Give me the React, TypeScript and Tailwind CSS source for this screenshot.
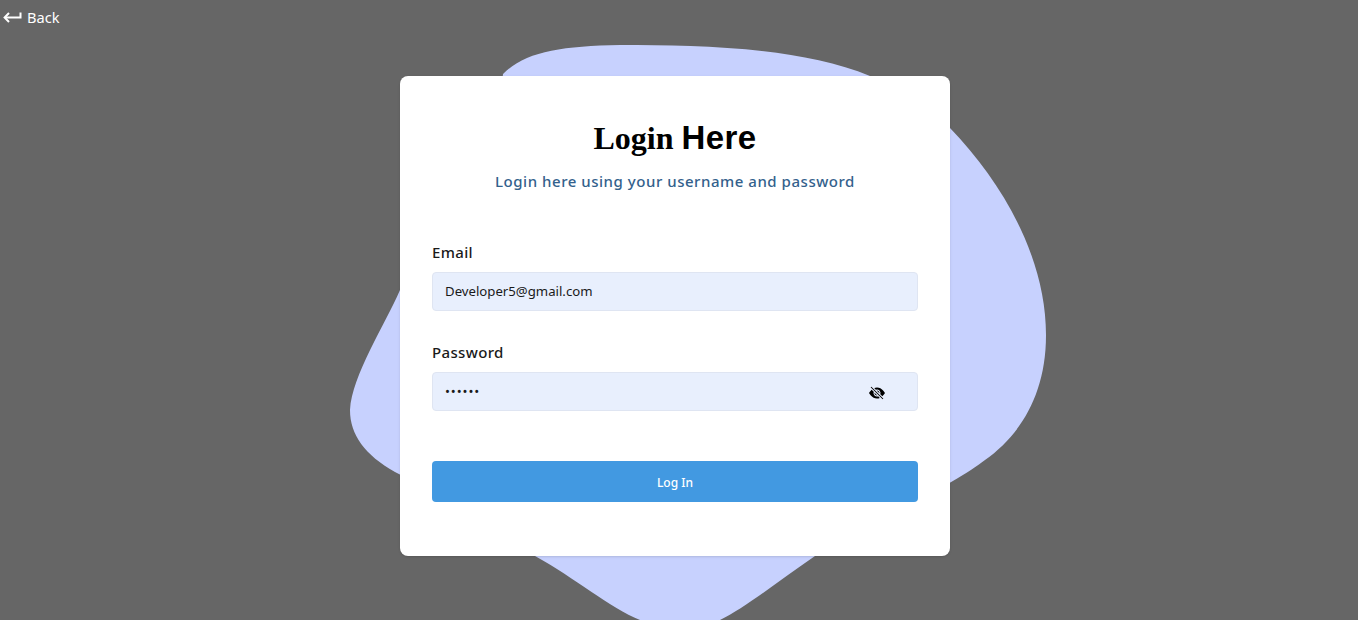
import { BsEyeSlashFill } from 'react-icons/bs'

const sans = "font-['Noto_Sans','Open_Sans',sans-serif]"

function Field({ label, children }: { label: string; children: React.ReactNode }) {
  return (
    <div>
      <label className="block text-[15px] leading-5 tracking-[0.35px] font-medium text-[#1a1a1a]">{label}</label>
      <div className="mt-[10px] h-[39px] pl-[12px] flex items-center justify-between bg-[#e8effd] border border-[#dfe5f2] rounded-[4px] text-[13.2px] text-[#1a1a1a]">
        {children}
      </div>
    </div>
  )
}

export default function App() {
  return (
    <div className={`relative h-[620px] w-full overflow-hidden bg-[#666666] ${sans}`}>
      <svg className="absolute inset-0" width="1358" height="620" viewBox="0 0 1358 620">
        <path
          fill="#c7d1fe"
          d="M503 74 C525 52 560 46 620 45 C700 45 800 47 870 76 C905 92 930 108 950 128 C1005 185 1046 260 1046 335 C1046 395 1020 435 985 460 C960 480 900 510 815 556 C780 580 745 608 720 620 L640 620 C610 608 575 578 535 556 C490 528 430 490 395 472 C365 455 350 435 350 410 C352 375 385 325 400 290 L500 100 Z"
        />
      </svg>
      <a className="absolute left-[3px] top-[7px] flex items-center gap-[5px] text-[14.6px] leading-5 text-white">
        <svg width="19" height="14" viewBox="0 0 19 14" fill="none" stroke="currentColor" strokeWidth="2">
          <path d="M17.5 2.5 V7.5 H2" />
          <path d="M6 3 L1.6 7.5 L6 12" />
        </svg>
        Back
      </a>
      <div className="relative pt-[76px] pr-[8px] flex justify-center">
        <div className="w-[550px] h-[480px] bg-white rounded-[8px] px-[32px] pt-[40px] shadow-sm">
          <h1 className="h-[42px] text-center text-[32px] leading-[42px] font-bold text-black">
            <span className="[font-family:'Liberation_Serif',serif]">Login </span>
            <span className="text-[33px] tracking-[0.4px] [font-family:'Liberation_Sans',Arial,sans-serif]">Here</span>
          </h1>
          <p className="mt-[13px] text-center text-[15px] leading-5 tracking-[0.53px] font-medium text-[#33618c]">
            Login here using your username and password
          </p>
          <div className="mt-[51px] flex flex-col gap-[31px]">
            <Field label="Email">
              <span className="pt-[1px]">Developer5@gmail.com</span>
            </Field>
            <Field label="Password">
              <span className="pt-[1px] tracking-[0.9px]">••••••</span>
              <BsEyeSlashFill size={16} className="mt-[3px] mr-[32px] text-black" />
            </Field>
          </div>
          <button className="mt-[50px] w-full h-[41px] pt-[3px] rounded-[4px] bg-[#4299e1] text-[12px] font-medium text-white">
            Log In
          </button>
        </div>
      </div>
    </div>
  )
}
